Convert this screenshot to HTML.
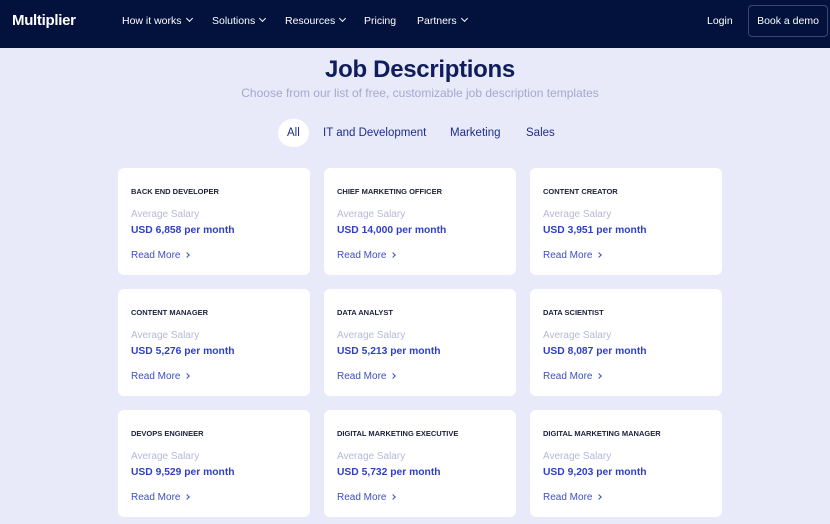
<!DOCTYPE html>
<html><head><meta charset="utf-8"><style>
*{margin:0;padding:0;box-sizing:border-box}
body{width:830px;height:524px;overflow:hidden;background:#e8eafa;font-family:"Liberation Sans",sans-serif;position:relative}
.nav{position:absolute;left:0;top:0;width:830px;height:48px;background:#02123d;color:#fff}
.nav span{position:absolute;top:15px;font-size:10.5px}
.logo{left:12px;top:12px!important;font-size:15px!important;font-weight:bold;letter-spacing:-0.3px}
.chev{display:inline-block;width:5px;height:5px;border-right:1.8px solid #fff;border-bottom:1.8px solid #fff;transform:rotate(45deg);margin-left:5px;position:relative;top:-3px}
.demo{position:absolute;left:748px;top:5px;width:80px;height:32px;border:1px solid #3a4670;border-radius:4px;color:#fff;font-size:10.5px;text-align:center;line-height:30px}
h1{position:absolute;top:56px;width:840px;text-align:center;font-size:24px;color:#0f1d5c;font-weight:bold;letter-spacing:-0.3px}
.sub{position:absolute;top:86px;width:840px;text-align:center;font-size:12px;color:#a4a9cc}
.tab{position:absolute;top:127px;font-size:11.5px;color:#1e2d8c}
.pill{position:absolute;left:278px;top:119px;width:31px;height:28px;background:#fff;border-radius:14px}
.card{position:absolute;width:192px;height:107px;background:#fff;border-radius:6px}
.card .t{position:absolute;left:13px;top:19px;font-size:7.5px;color:#1b1f3b;font-weight:bold}
.card .a{position:absolute;left:13px;top:41px;font-size:10px;color:#b5b9d8}
.card .u{position:absolute;left:13px;top:57px;font-size:10.3px;color:#2f3fc9;font-weight:bold}
.card .r{position:absolute;left:13px;top:82px;font-size:10px;color:#3d4fc4}
.card .r i{display:inline-block;width:4px;height:4px;border-right:1.3px solid #3d4fc4;border-top:1.3px solid #3d4fc4;transform:rotate(45deg);margin-left:5px;position:relative;top:-1px}
</style></head><body>
<div class="nav">
<span class="logo">Multiplier</span>
<span style="left:122px">How it works<i class="chev"></i></span>
<span style="left:212px">Solutions<i class="chev"></i></span>
<span style="left:285px">Resources<i class="chev"></i></span>
<span style="left:364px">Pricing</span>
<span style="left:417px">Partners<i class="chev"></i></span>
<span style="left:707px">Login</span>
<div class="demo">Book a demo</div>
</div>
<h1>Job Descriptions</h1>
<div class="sub">Choose from our list of free, customizable job description templates</div>
<div class="pill"></div>
<span class="tab" style="left:287px">All</span>
<span class="tab" style="left:323px">IT and Development</span>
<span class="tab" style="left:450px">Marketing</span>
<span class="tab" style="left:526px">Sales</span>

<div class="card" style="left:118px;top:168px"><div class="t">BACK END DEVELOPER</div><div class="a">Average Salary</div><div class="u">USD 6,858 per month</div><div class="r">Read More<i></i></div></div>
<div class="card" style="left:324px;top:168px"><div class="t">CHIEF MARKETING OFFICER</div><div class="a">Average Salary</div><div class="u">USD 14,000 per month</div><div class="r">Read More<i></i></div></div>
<div class="card" style="left:530px;top:168px"><div class="t">CONTENT CREATOR</div><div class="a">Average Salary</div><div class="u">USD 3,951 per month</div><div class="r">Read More<i></i></div></div>
<div class="card" style="left:118px;top:289px"><div class="t">CONTENT MANAGER</div><div class="a">Average Salary</div><div class="u">USD 5,276 per month</div><div class="r">Read More<i></i></div></div>
<div class="card" style="left:324px;top:289px"><div class="t">DATA ANALYST</div><div class="a">Average Salary</div><div class="u">USD 5,213 per month</div><div class="r">Read More<i></i></div></div>
<div class="card" style="left:530px;top:289px"><div class="t">DATA SCIENTIST</div><div class="a">Average Salary</div><div class="u">USD 8,087 per month</div><div class="r">Read More<i></i></div></div>
<div class="card" style="left:118px;top:410px"><div class="t">DEVOPS ENGINEER</div><div class="a">Average Salary</div><div class="u">USD 9,529 per month</div><div class="r">Read More<i></i></div></div>
<div class="card" style="left:324px;top:410px"><div class="t">DIGITAL MARKETING EXECUTIVE</div><div class="a">Average Salary</div><div class="u">USD 5,732 per month</div><div class="r">Read More<i></i></div></div>
<div class="card" style="left:530px;top:410px"><div class="t">DIGITAL MARKETING MANAGER</div><div class="a">Average Salary</div><div class="u">USD 9,203 per month</div><div class="r">Read More<i></i></div></div>
</body></html>
